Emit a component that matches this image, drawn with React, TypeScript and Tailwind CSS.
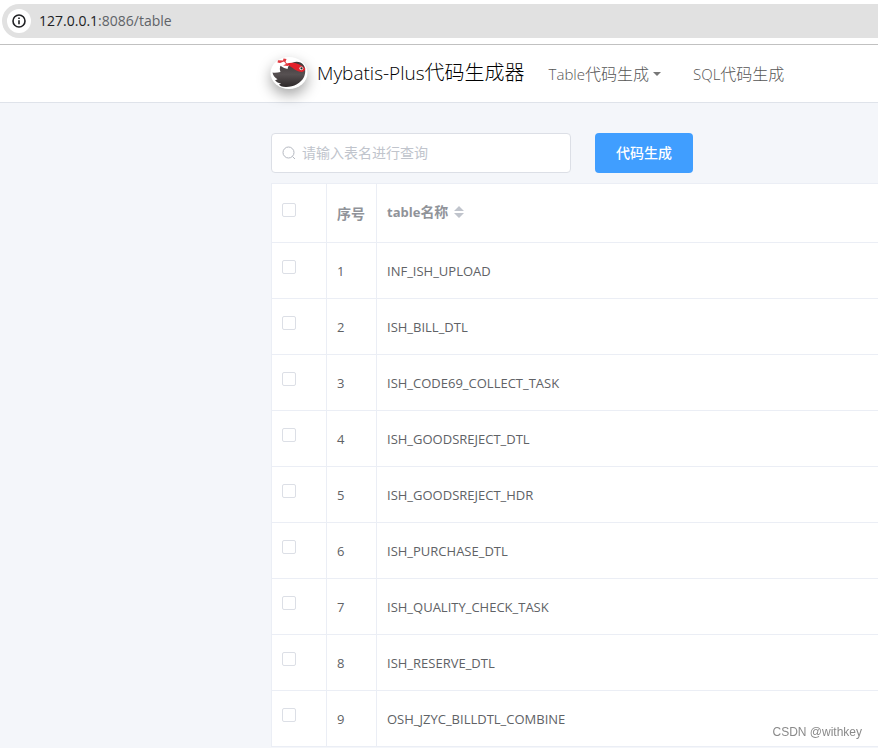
import React, { useState } from 'react';

const TABLES = [
  'INF_ISH_UPLOAD',
  'ISH_BILL_DTL',
  'ISH_CODE69_COLLECT_TASK',
  'ISH_GOODSREJECT_DTL',
  'ISH_GOODSREJECT_HDR',
  'ISH_PURCHASE_DTL',
  'ISH_QUALITY_CHECK_TASK',
  'ISH_RESERVE_DTL',
  'OSH_JZYC_BILLDTL_COMBINE',
];

function Logo() {
  return (
    <svg width="38" height="34" viewBox="0 0 38 34" className="overflow-visible drop-shadow-[0_6px_7px_rgba(0,0,0,0.35)]" aria-hidden="true">
      <defs>
        <linearGradient id="bird" x1="0" y1="0" x2="0" y2="1">
          <stop offset="0" stopColor="#3f393a" />
          <stop offset="0.5" stopColor="#575152" />
          <stop offset="1" stopColor="#2d2829" />
        </linearGradient>
      </defs>
      <ellipse cx="18" cy="16" rx="18.5" ry="16" fill="#fff" />
      <path d="M1.5 15.5C4 16 7 15.5 9.5 15C8.5 12.5 8.7 10.5 9.5 8.7C12 10.5 14.5 11.5 16.5 12C17 9 19 6.5 22 5.5C26 4 30 5 32.5 8C35 11 34.5 17 33 20C30 26 23 30 15 30C11 30 8.5 28.5 8 27.5C9 27.3 9.5 27 10 26.5C7 26 4.8 24.5 4 23C5 23 6 22.8 6.5 22.3C4 21 2 18.5 1.5 15.5Z" fill="url(#bird)" />
      <path d="M16 6.5C21 4.5 29 6 34.3 11.5C34 14.5 31.5 15.5 28 14.5C23 13 19.5 8.5 16 8.3Z" fill="#e3202a" />
      <path d="M17 7.5L14.5 5L15.5 2L12.5 1.5L12 3.5L7 3.2L6.5 5.5L9 6L13 4.5L15 7L12 8.5L17 9Z" fill="#e23a41" />
      <circle cx="30.3" cy="11.3" r="1.9" fill="#e9e6e4" />
      <circle cx="30.5" cy="11.3" r="1.1" fill="#2a2526" />
    </svg>
  );
}

function Checkbox({ label, checked, onChange }: { label: string; checked: boolean; onChange: () => void }) {
  return (
    <input
      type="checkbox"
      aria-label={label}
      checked={checked}
      onChange={onChange}
      className="block w-3.5 h-3.5 appearance-none rounded-xs border border-[#dcdfe6] bg-white checked:bg-[#409eff] checked:border-[#409eff]"
    />
  );
}

export default function App() {
  const [keyword, setKeyword] = useState('');
  const [selected, setSelected] = useState<string[]>([]);

  const rows = TABLES.filter((name) => name.toLowerCase().includes(keyword.toLowerCase()));

  const toggle = (name: string) => {
    setSelected(selected.includes(name) ? selected.filter((s) => s !== name) : [...selected, name]);
  };

  return (
    <div className="min-h-screen overflow-x-hidden bg-[#f4f6fa] text-[#606266] font-['Open_Sans','Noto_Sans_CJK_SC',sans-serif]">
      <div className="bg-white border-b border-[#c1c1c1] pt-1 pb-1.5 pl-0.5">
        <div className="flex items-center gap-2 h-[34px] pl-[5px] rounded-l-full bg-[#e1e1e1]">
          <span className="flex items-center justify-center w-6 h-6 rounded-full bg-white">
            <svg width="14" height="14" viewBox="0 0 14 14" fill="none" stroke="#202124" aria-hidden="true">
              <circle cx="7" cy="7" r="6" strokeWidth="1.6" />
              <path d="M7 6.2V10.2M7 3.6V5.1" strokeWidth="1.6" />
            </svg>
          </span>
          <span className="text-sm text-[#5f6368]">
            <span className="text-[#202124]">127.0.0.1</span>:8086/table
          </span>
        </div>
      </div>

      <header className="flex items-center h-[58px] pl-[271px] bg-white border-b border-[#dfe3ea] whitespace-nowrap">
        <a href="#" className="flex items-center gap-2 font-light text-black">
          <Logo />
          <span className="text-[19px]">
            Mybatis-Plus<span className="text-xl">代码生成器</span>
          </span>
        </a>
        <nav className="flex items-center gap-8 pl-6 text-[15px] font-light text-[#555]">
          <button type="button" className="flex items-center gap-1">
            <span>
              Table<span className="text-base">代码生成</span>
            </span>
            <svg width="8" height="4" viewBox="0 0 8 4" fill="#777" aria-hidden="true">
              <path d="M0 0H8L4 4Z" />
            </svg>
          </button>
          <a href="#sql">
            SQL<span className="text-base">代码生成</span>
          </a>
        </nav>
      </header>

      <main className="pl-[271px] pt-[30px]">
        <div className="flex items-center gap-6">
          <label className="flex items-center gap-1.5 w-[300px] h-10 px-2.5 rounded-sm border border-[#dcdfe6] bg-white">
            <svg width="14" height="14" viewBox="0 0 14 14" fill="none" stroke="#b4b8c0" aria-hidden="true">
              <circle cx="6.5" cy="6.5" r="5.5" />
              <path d="M10.5 10.5L13 13" />
            </svg>
            <input
              type="text"
              aria-label="表名"
              placeholder="请输入表名进行查询"
              value={keyword}
              onChange={(e) => setKeyword(e.target.value)}
              className="flex-1 min-w-0 text-sm outline-none placeholder:text-[#c0c4cc]"
            />
          </label>
          <button type="button" className="h-10 px-[21px] rounded-sm bg-[#409eff] text-sm font-medium text-white">
            代码生成
          </button>
        </div>

        <table className="w-full mt-2.5 table-fixed border-separate border-spacing-0 border-t border-l border-[#ebeef5] bg-white text-left text-[13px]">
          <colgroup>
            <col className="w-[55px]" />
            <col className="w-[50px]" />
            <col />
          </colgroup>
          <thead className="text-[#909399]">
            <tr className="h-[59px]">
              <th className="px-2.5 pb-1.5 border-r border-b border-[#ebeef5]">
                <Checkbox
                  label="全选"
                  checked={selected.length === TABLES.length}
                  onChange={() => setSelected(selected.length === TABLES.length ? [] : TABLES)}
                />
              </th>
              <th className="px-2.5 pt-0.5 border-r border-b border-[#ebeef5] text-sm font-bold whitespace-nowrap">序号</th>
              <th className="px-2.5 pb-0.5 border-b border-[#ebeef5] font-bold">
                <button type="button" className="flex items-center gap-1.5">
                  <span>
                    table<span className="text-sm">名称</span>
                  </span>
                  <svg width="10" height="12" viewBox="0 0 10 12" fill="#c0c4cc" aria-hidden="true">
                    <path d="M0 5L5 0L10 5ZM0 7H10L5 12Z" />
                  </svg>
                </button>
              </th>
            </tr>
          </thead>
          <tbody>
            {rows.map((name) => (
              <tr key={name} className="h-14">
                <td className="px-2.5 pb-2 border-r border-b border-[#ebeef5]">
                  <Checkbox label={name} checked={selected.includes(name)} onChange={() => toggle(name)} />
                </td>
                <td className="px-2.5 pt-0.5 border-r border-b border-[#ebeef5]">{TABLES.indexOf(name) + 1}</td>
                <td className="px-2.5 pt-0.5 border-b border-[#ebeef5]">{name}</td>
              </tr>
            ))}
          </tbody>
        </table>
      </main>

      <div className="fixed right-4 bottom-2 text-xs leading-4 text-[#8a8a8a] font-['Liberation_Sans',sans-serif]">CSDN @withkey</div>
    </div>
  );
}
